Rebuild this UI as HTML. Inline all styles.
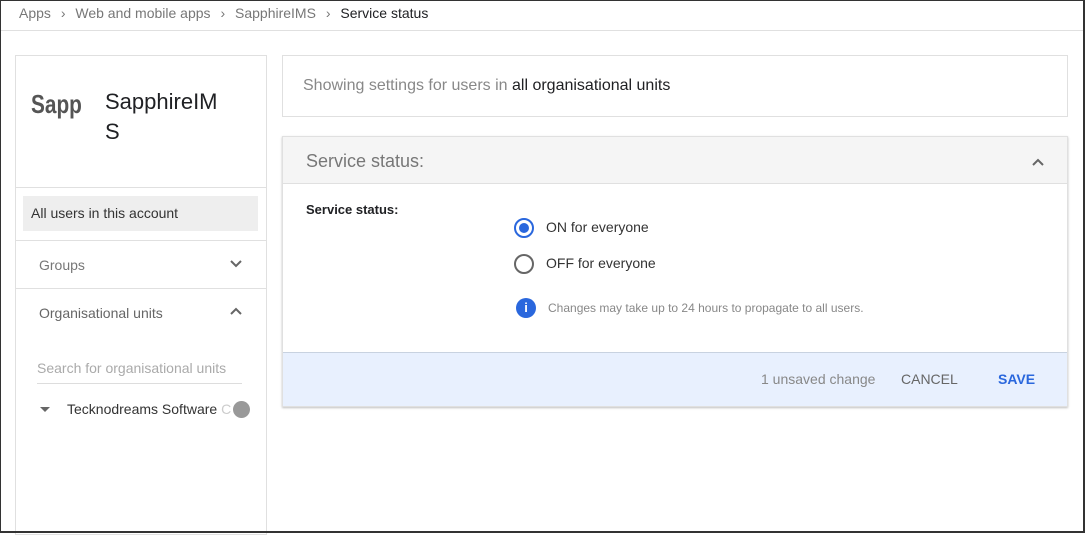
<!DOCTYPE html>
<html><head><style>
*{box-sizing:border-box;margin:0;padding:0}
body{width:1085px;height:533px;overflow:hidden;background:#fff;font-family:"Liberation Sans",sans-serif;position:relative}
.a{position:absolute}
</style></head><body>
<div class="a" style="left:19px;top:5px;font-size:14px;color:#777;white-space:nowrap">Apps <span style="margin:0 6px">›</span> Web and mobile apps <span style="margin:0 6px">›</span> SapphireIMS <span style="margin:0 6px">›</span> <span style="color:#202124">Service status</span></div>
<div class="a" style="left:0;top:30px;width:1085px;height:1px;background:#e0e0e0"></div>

<div class="a" style="left:15px;top:55px;width:252px;height:480px;border:1px solid #e0e0e0"></div>
<div class="a" style="left:31px;top:89px;font-size:26px;color:#555;font-weight:bold;transform:scaleX(.8);transform-origin:left">Sapp</div>
<div class="a" style="left:105px;top:87px;font-size:22px;line-height:30px;color:#202124;width:118px;word-break:break-all">SapphireIMS</div>
<div class="a" style="left:16px;top:187px;width:250px;height:1px;background:#e0e0e0"></div>
<div class="a" style="left:23px;top:196px;width:235px;height:35px;background:#eee;font-size:14px;color:#333;padding:9px 8px">All users in this account</div>
<div class="a" style="left:16px;top:240px;width:250px;height:1px;background:#e0e0e0"></div>
<div class="a" style="left:39px;top:257px;font-size:14px;color:#777">Groups</div>
<svg class="a" style="left:229px;top:259px" width="14" height="10"><path d="M2 2l5 5 5-5" fill="none" stroke="#666" stroke-width="2"/></svg>
<div class="a" style="left:16px;top:288px;width:250px;height:1px;background:#e0e0e0"></div>
<div class="a" style="left:39px;top:305px;font-size:14px;color:#666">Organisational units</div>
<svg class="a" style="left:229px;top:306px" width="14" height="10"><path d="M2 8l5-5 5 5" fill="none" stroke="#666" stroke-width="2"/></svg>
<div class="a" style="left:37px;top:360px;font-size:14px;color:#aaa">Search for organisational units</div>
<div class="a" style="left:37px;top:383px;width:205px;height:1px;background:#ddd"></div>
<svg class="a" style="left:40px;top:407px" width="10" height="6"><path d="M0 0h10L5 5z" fill="#666"/></svg>
<div class="a" style="left:67px;top:401px;font-size:14px;color:#333;white-space:nowrap;width:175px;overflow:hidden">Tecknodreams Software <span style="color:#ccc">C</span></div>
<div class="a" style="left:233px;top:401px;width:17px;height:17px;border-radius:50%;background:#999"></div>

<div class="a" style="left:282px;top:55px;width:786px;height:62px;border:1px solid #e0e0e0;font-size:16px;color:#888;padding:21px 20px">Showing settings for users in <span style="color:#202124">all organisational units</span></div>

<div class="a" style="left:282px;top:136px;width:786px;height:271px;border:1px solid #e0e0e0;box-shadow:0 1px 2px rgba(0,0,0,.25)">
<div style="height:47px;background:#f5f5f5;border-bottom:1px solid #e0e0e0;font-size:18px;color:#777;padding:14px 23px">Service status:</div>
<svg class="a" style="left:748px;top:20px" width="14" height="10"><path d="M2 8l5-5 5 5" fill="none" stroke="#666" stroke-width="2"/></svg>
<div class="a" style="left:23px;top:65px;font-size:13px;color:#202124;font-weight:bold">Service status:</div>
<div class="a" style="left:231px;top:81px;width:20px;height:20px;border-radius:50%;border:2px solid #2a67dd"><div style="margin:3px;width:10px;height:10px;border-radius:50%;background:#2a67dd"></div></div>
<div class="a" style="left:263px;top:82px;font-size:14px;color:#333">ON for everyone</div>
<div class="a" style="left:231px;top:117px;width:20px;height:20px;border-radius:50%;border:2px solid #666"></div>
<div class="a" style="left:263px;top:118px;font-size:14px;color:#333">OFF for everyone</div>
<div class="a" style="left:233px;top:161px;width:20px;height:20px;border-radius:50%;background:#2a67dd;color:#fff;font-size:13px;font-weight:bold;text-align:center;line-height:20px">i</div>
<div class="a" style="left:265px;top:164px;font-size:12px;color:#888">Changes may take up to 24 hours to propagate to all users.</div>
<div class="a" style="left:0;top:215px;width:784px;height:54px;background:#e8f0fe;border-top:1px solid #c8d2e0"></div>
<div class="a" style="left:478px;top:234px;font-size:14px;color:#888">1 unsaved change</div>
<div class="a" style="left:618px;top:234px;font-size:14px;color:#666">CANCEL</div>
<div class="a" style="left:715px;top:234px;font-size:14px;color:#2a67dd;font-weight:bold">SAVE</div>
</div>
<div class="a" style="left:0;top:0;width:1085px;height:533px;border:1px solid #333;border-right:2px solid #333;border-bottom:2px solid #333"></div>
</body></html>
